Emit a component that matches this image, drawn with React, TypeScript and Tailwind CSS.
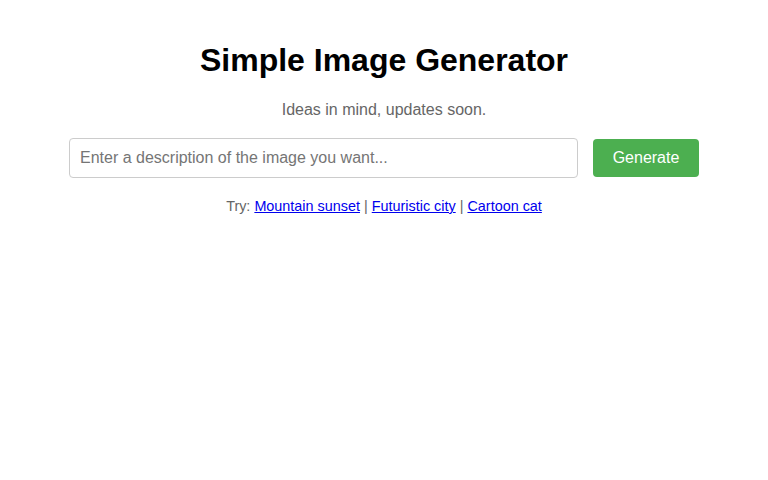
import React from "react";

export default function App() {
  return (
    <div className="min-h-[480px] bg-white text-center" style={{ fontFamily: '"Liberation Sans", Arial, sans-serif' }}>
      <div className="pt-[42px]">
        <h1 className="text-[32px] leading-[37px] font-bold text-black">Simple Image Generator</h1>
        <p className="mt-[22px] text-[16px] leading-[18px] text-[#666666]">Ideas in mind, updates soon.</p>
        <div className="mx-auto mt-[19px] flex w-[630px] items-center gap-[15px]">
          <input
            type="text"
            placeholder="Enter a description of the image you want..."
            className="h-[40px] flex-1 rounded-[4px] border border-[#cccccc] px-[10px] text-[16px] text-black placeholder:text-[#757575] outline-none"
          />
          <button className="h-[38px] w-[106px] rounded-[4px] bg-[#4CAF50] text-[16px] text-white">Generate</button>
        </div>
        <p className="mt-[20px] text-[14.4px] leading-[17px] text-[#666666]">
          Try: <a href="#" className="text-[#0000EE] underline">Mountain sunset</a> |{" "}
          <a href="#" className="text-[#0000EE] underline">Futuristic city</a> |{" "}
          <a href="#" className="text-[#0000EE] underline">Cartoon cat</a>
        </p>
      </div>
    </div>
  );
}
